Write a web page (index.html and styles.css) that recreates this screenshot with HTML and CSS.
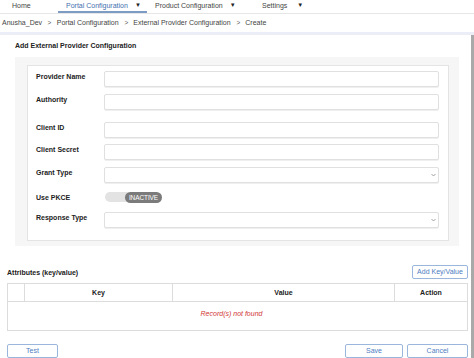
FILE: index.html
```html
<!DOCTYPE html>
<html>
<head>
<meta charset="utf-8">
<link rel="stylesheet" href="styles.css">
</head>
<body>
<nav class="nav">
  <span class="nav-item home">Home</span>
  <span class="nav-item active portal">Portal Configuration<span class="caret">▼</span></span>
  <span class="nav-item product">Product Configuration<span class="caret">▼</span></span>
  <span class="nav-item settings">Settings<span class="caret caret-wide">▼</span></span>
</nav>
<div class="crumbs">
  <span>Anusha_Dev</span><span class="sep">&gt;</span><span>Portal Configuration</span><span class="sep">&gt;</span><span>External Provider Configuration</span><span class="sep">&gt;</span><span>Create</span>
</div>
<div class="band"></div>
<main class="main">
  <h1 class="title">Add External Provider Configuration</h1>
  <section class="panel">
    <div class="card">
      <div class="row r1"><label class="lbl">Provider Name</label><div class="field"></div></div>
      <div class="row r2"><label class="lbl">Authority</label><div class="field"></div></div>
      <div class="row r3"><label class="lbl">Client ID</label><div class="field"></div></div>
      <div class="row r4"><label class="lbl">Client Secret</label><div class="field"></div></div>
      <div class="row r5"><label class="lbl">Grant Type</label><div class="field select"><svg class="chev" width="5" height="4" viewBox="0 0 5 4"><path d="M0.5 1 L2.5 3 L4.5 1" fill="none" stroke="#999" stroke-width="0.9"/></svg></div></div>
      <div class="row r6"><label class="lbl">Use PKCE</label><div class="toggle"><span class="knob">INACTIVE</span></div></div>
      <div class="row r7"><label class="lbl">Response Type</label><div class="field select"><svg class="chev" width="5" height="4" viewBox="0 0 5 4"><path d="M0.5 1 L2.5 3 L4.5 1" fill="none" stroke="#999" stroke-width="0.9"/></svg></div></div>
    </div>
  </section>
  <div class="attr-head">
    <span class="attr-title">Attributes (key/value)</span>
    <button class="btn add-btn">Add Key/Value</button>
  </div>
  <table class="grid">
    <thead>
      <tr><th class="c0"></th><th class="c1">Key</th><th class="c2">Value</th><th class="c3">Action</th></tr>
    </thead>
    <tbody>
      <tr><td colspan="4" class="empty">Record(s) not found</td></tr>
    </tbody>
  </table>
  <div class="footer">
    <button class="btn test-btn">Test</button>
    <div class="footer-right">
      <button class="btn save-btn">Save</button>
      <button class="btn cancel-btn">Cancel</button>
    </div>
  </div>
</main>
</body>
</html>
```
FILE: styles.css
```css
* { box-sizing: border-box; }
html, body { margin: 0; padding: 0; }
body {
  width: 474px;
  height: 358px;
  overflow: hidden;
  background: #fff;
  font-family: "Liberation Sans", Arial, sans-serif;
  font-size: 7px;
  color: #333;
}
.nav {
  height: 14px;
  display: flex;
  align-items: stretch;
  border-bottom: 1px solid #e6e6e6;
}
.nav-item {
  display: flex;
  align-items: center;
  line-height: 11px;
  padding-bottom: 2px;
  color: #444;
}
.home { margin-left: 12px; width: 46px; }
.portal {
  width: 89px;
  padding-left: 8px;
  color: #3f6fae;
  border-bottom: 2px solid #7d9cc4;
  padding-bottom: 0;
}
.product { margin-left: 8px; width: 107px; }
.settings { margin-left: 0; }
.caret { font-size: 6px; margin-left: 7px; color: #222; }
.caret-wide { margin-left: 10px; }
.crumbs {
  height: 18px;
  line-height: 17px;
  padding-left: 2px;
  color: #444;
  white-space: nowrap;
}
.sep {
  display: inline-block;
  margin: 0 5px;
  font-size: 8px;
  color: #555;
  transform: scaleX(0.8);
}
.band { height: 3px; background: #eceef7; }
.main {
  border-right: 3px solid #a9a9a9;
  height: 323px;
}
.title {
  margin: 0;
  height: 22px;
  line-height: 22px;
  padding-left: 15px;
  font-size: 7px;
  font-weight: bold;
  color: #222;
}
.panel {
  margin: 0 12px 0 15px;
  background: #f6f6f6;
  padding: 8px 10px 5px 12px;
}
.card {
  background: #fff;
  border: 1px solid #e4e4e4;
  padding: 5px 9px 12px 8px;
}
.row { display: flex; align-items: flex-start; }
.r2 { margin-top: 7px; }
.r3 { margin-top: 12px; }
.r4 { margin-top: 6px; }
.r5 { margin-top: 7px; }
.r6 { margin-top: 9px; }
.r7 { margin-top: 9px; }
.lbl {
  width: 68px;
  flex: none;
  font-weight: bold;
  line-height: 11px;
  color: #222;
}
.r1 .lbl { line-height: 12px; }
.field {
  flex: 1;
  height: 16px;
  border: 1px solid #e0e0e0;
  border-radius: 2px;
  box-shadow: 0 1px 0 #efefef;
  background: #fff;
  position: relative;
}
.select { display: flex; align-items: center; justify-content: flex-end; padding-right: 2px; }
.chev { display: block; }
.toggle {
  position: relative;
  width: 55px;
  height: 10px;
  background: #e3e3e3;
  border-radius: 5px;
  margin-left: 1px;
}
.knob {
  position: absolute;
  right: -2px;
  top: -0.5px;
  width: 37px;
  height: 11px;
  border-radius: 6px;
  background: #7b7b7b;
  color: #fff;
  font-size: 6.5px;
  line-height: 11px;
  text-align: center;
  letter-spacing: -0.1px;
}
.attr-head {
  display: flex;
  justify-content: space-between;
  align-items: flex-end;
  margin-top: 19px;
  padding: 0 3px 0 7px;
}
.attr-title { font-weight: bold; color: #222; line-height: 10px; margin-bottom: 1px; }
.btn {
  font-family: "Liberation Sans", Arial, sans-serif;
  font-size: 7px;
  color: #4d7cc2;
  background: #fff;
  border: 1px solid #9bb6dc;
  border-radius: 2px;
  padding: 0;
  height: 14px;
  line-height: 12px;
}
.add-btn { width: 56px; }
.grid {
  margin: 4px 0 0 7px;
  width: 461px;
  border-collapse: collapse;
  table-layout: fixed;
}
.grid th {
  height: 18px;
  border: 1px solid #dcdcdc;
  font-weight: bold;
  color: #222;
  font-size: 7px;
  padding: 0;
}
.c0 { width: 17px; }
.c1 { width: 148px; }
.c2 { width: 222px; }
.grid td {
  border: 1px solid #dcdcdc;
  height: 29px;
  padding: 0 0 6px 0;
}
.empty {
  text-align: center;
  color: #d03636;
  font-style: italic;
  padding-right: 12px !important;
}
.footer {
  display: flex;
  justify-content: space-between;
  margin-top: 13px;
  padding: 0 3px 0 7px;
}
.test-btn { width: 51px; }
.footer-right { display: flex; gap: 4px; }
.save-btn { width: 58px; }
.cancel-btn { width: 61px; }
```
